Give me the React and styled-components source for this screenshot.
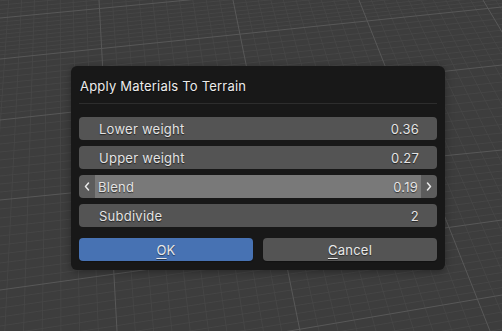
import React from "react";
import styled, { createGlobalStyle } from "styled-components";

const GlobalStyle = createGlobalStyle`
  html, body {
    margin: 0;
    padding: 0;
    background: #3d3d3d;
  }
  body {
    font-family: "Inter", "Noto Sans", "DejaVu Sans", sans-serif;
  }
`;

const Viewport = styled.div`
  position: relative;
  width: 502px;
  height: 331px;
  overflow: hidden;
  background: #3d3d3d;
  padding: 66px 0 0 71px;
  box-sizing: border-box;
`;

const GridSvg = styled.svg`
  position: absolute;
  inset: 0;
  pointer-events: none;
`;

const Dialog = styled.div`
  position: relative;
  width: 374px;
  box-sizing: border-box;
  padding: 0 8px 9px 8px;
  background: #181818;
  border-radius: 6px;
  box-shadow: 0 2px 8px rgba(0, 0, 0, 0.35);
  display: flex;
  flex-direction: column;
`;

const Header = styled.div`
  height: 37px;
  display: flex;
  align-items: center;
  padding-left: 1px;
  border-bottom: 1px solid #2d2d2d;
  margin-bottom: 13px;
`;

const Title = styled.span`
  font-size: 13px;
  letter-spacing: 0.2px;
  color: #ececec;
  text-shadow: 0 1px 1px rgba(0, 0, 0, 0.6);
  margin-top: 2px;
`;

const Fields = styled.div`
  display: flex;
  flex-direction: column;
  gap: 6px;
`;

const Field = styled.div`
  height: 23px;
  display: flex;
  align-items: stretch;
  border-radius: 4px;
  overflow: hidden;
  background: ${(p) => (p.$active ? "#5c5c5c" : "#545454")};
  font-size: 13px;
  letter-spacing: 0.25px;
  color: #e4e4e4;
  text-shadow: 0 1px 1px rgba(0, 0, 0, 0.6);
`;

const Arrow = styled.div`
  width: 16px;
  flex: none;
  display: flex;
  align-items: center;
  justify-content: center;
`;

const FieldBody = styled.div`
  flex: 1;
  display: flex;
  align-items: center;
  justify-content: space-between;
  padding: ${(p) => (p.$active ? "0 3px 0 3px" : "0 18px 0 20px")};
  background: ${(p) => (p.$active ? "#797979" : "transparent")};
`;

const Label = styled.span``;
const Value = styled.span``;

const Buttons = styled.div`
  display: flex;
  gap: 10px;
  margin-top: 11px;
`;

const Button = styled.div`
  flex: 1;
  height: 23px;
  border-radius: 4px;
  display: flex;
  align-items: center;
  justify-content: center;
  background: ${(p) => (p.$primary ? "#4772b3" : "#545454")};
  font-size: 13px;
  letter-spacing: 0.25px;
  color: #e8e8e8;
  text-shadow: 0 1px 1px rgba(0, 0, 0, 0.5);
  box-shadow: 0 1px 1px rgba(0, 0, 0, 0.25);

  u {
    text-decoration-thickness: 1px;
    text-underline-offset: 3px;
  }
`;

const Chevron = ({ dir }) => (
  <svg width="6" height="9" viewBox="0 0 6 9">
    <path
      d={dir === "left" ? "M4.5 1 L1.5 4.5 L4.5 8" : "M1.5 1 L4.5 4.5 L1.5 8"}
      fill="none"
      stroke="#e8e8e8"
      strokeWidth="1.5"
      strokeLinecap="round"
      strokeLinejoin="round"
    />
  </svg>
);

// perspective grid of the 3D viewport behind the popup
const H_MAJOR = [[-25, -70], [18, -30], [59, 7], [120, 65], [200, 150], [290, 220], [380, 295], [480, 380]];
const V_MAJOR = [[-30, -70], [99, 117], [233, 300], [359, 490], [483, 680], [610, 870]];

const lerp = (a, b, t) => a + (b - a) * t;

const ViewportGrid = () => {
  const minor = [];
  const major = [];
  for (let i = 0; i < H_MAJOR.length - 1; i++) {
    const [a0, b0] = H_MAJOR[i];
    const [a1, b1] = H_MAJOR[i + 1];
    for (let k = 1; k < 10; k++) {
      const t = k / 10;
      minor.push([0, lerp(a0, a1, t), 502, lerp(b0, b1, t)]);
    }
  }
  for (let i = 0; i < V_MAJOR.length - 1; i++) {
    const [a0, b0] = V_MAJOR[i];
    const [a1, b1] = V_MAJOR[i + 1];
    for (let k = 1; k < 10; k++) {
      const t = k / 10;
      minor.push([lerp(a0, a1, t), 0, lerp(b0, b1, t), 331]);
    }
  }
  H_MAJOR.forEach(([a, b]) => major.push([0, a, 502, b]));
  V_MAJOR.forEach(([a, b]) => major.push([a, 0, b, 331]));

  return (
    <GridSvg width="502" height="331" viewBox="0 0 502 331">
      {minor.map(([x1, y1, x2, y2], i) => (
        <line key={"m" + i} x1={x1} y1={y1} x2={x2} y2={y2} stroke="#484848" strokeWidth="0.8" />
      ))}
      {major.map(([x1, y1, x2, y2], i) => (
        <line key={"M" + i} x1={x1} y1={y1} x2={x2} y2={y2} stroke="#585858" strokeWidth="1" />
      ))}
    </GridSvg>
  );
};

const fields = [
  { label: "Lower weight", value: "0.36" },
  { label: "Upper weight", value: "0.27" },
  { label: "Blend", value: "0.19", active: true },
  { label: "Subdivide", value: "2" },
];

export default function App() {
  return (
    <>
      <GlobalStyle />
      <Viewport>
        <ViewportGrid />
        <Dialog>
          <Header>
            <Title>Apply Materials To Terrain</Title>
          </Header>
          <Fields>
            {fields.map((f) => (
              <Field key={f.label} $active={f.active}>
                {f.active && (
                  <Arrow>
                    <Chevron dir="left" />
                  </Arrow>
                )}
                <FieldBody $active={f.active}>
                  <Label>{f.label}</Label>
                  <Value>{f.value}</Value>
                </FieldBody>
                {f.active && (
                  <Arrow>
                    <Chevron dir="right" />
                  </Arrow>
                )}
              </Field>
            ))}
          </Fields>
          <Buttons>
            <Button $primary>
              <span><u>O</u>K</span>
            </Button>
            <Button>
              <span><u>C</u>ancel</span>
            </Button>
          </Buttons>
        </Dialog>
      </Viewport>
    </>
  );
}
